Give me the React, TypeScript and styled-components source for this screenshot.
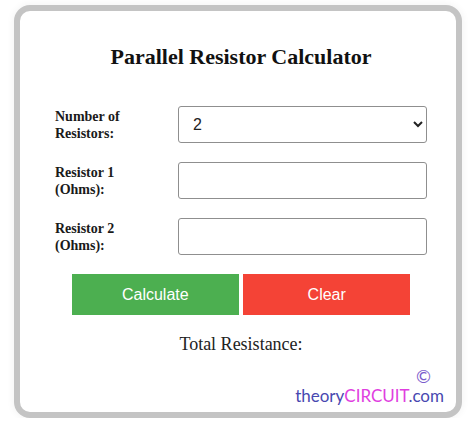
import React, { useState } from 'react';
import styled, { createGlobalStyle } from 'styled-components';

const GlobalStyle = createGlobalStyle`
    html, body {
        margin: 0;
        padding: 0;
        background: #ffffff;
    }
    body {
        font-family: 'Liberation Serif', 'Times New Roman', serif;
    }
`;

const Page = styled.div`
    padding: 5px 0 0 14px;
`;

const Card = styled.div`
    position: relative;
    box-sizing: border-box;
    width: 448px;
    height: 413px;
    padding: 33px 29px 0 35px;
    border: 6px solid #c4c4c4;
    border-radius: 16px;
    background: #ffffff;
    box-shadow: 0 0 8px rgba(0, 0, 0, 0.06);
`;

const Title = styled.h2`
    margin: 0 0 36px;
    font-size: 22px;
    line-height: 26px;
    font-weight: bold;
    text-align: center;
    color: #111;
`;

const Form = styled.div`
    display: grid;
    grid-template-columns: 123px 1fr;
    row-gap: 19px;
    align-items: center;
`;

const Label = styled.label`
    font-size: 14px;
    line-height: 17px;
    font-weight: bold;
    color: #1a1a1a;
`;

const fieldCss = `
    box-sizing: border-box;
    width: 100%;
    height: 37px;
    margin: 0;
    border: 1px solid #8f8f8f;
    border-radius: 3px;
    background: #fff;
    font-family: 'Liberation Sans', Arial, sans-serif;
    font-size: 16px;
    color: #222;
`;

const Select = styled.select`
    ${fieldCss}
    padding: 0 8px 0 10px;
`;

const Input = styled.input`
    ${fieldCss}
    padding: 0 10px;
`;

const Buttons = styled.div`
    display: flex;
    justify-content: center;
    gap: 4px;
    margin-top: 19px;
`;

const Button = styled.button<{ $tone: 'go' | 'stop' }>`
    width: 45%;
    height: 41px;
    border: none;
    border-radius: 0;
    background: ${(p) => (p.$tone === 'go' ? '#4caf50' : '#f44336')};
    color: #fff;
    font-family: 'Liberation Sans', Arial, sans-serif;
    font-size: 16px;
    cursor: pointer;
`;

const Result = styled.p`
    margin: 19px 0 0;
    font-size: 18px;
    line-height: 21px;
    text-align: center;
    color: #222;
`;

const Mark = styled.div`
    position: absolute;
    right: 12px;
    bottom: 6px;
    font-family: Lato, 'Open Sans', sans-serif;
    font-size: 17px;
    line-height: 20px;
    color: #4848b0;
`;

const Circuit = styled.span`
    color: #e03ee0;
`;

const Copy = styled.span`
    position: absolute;
    right: 13px;
    top: -19px;
    font-size: 18px;
    line-height: 18px;
    color: #7a5ccc;
`;

export default function App() {
    const [count, setCount] = useState('2');
    const [values, setValues] = useState<string[]>(['', '']);
    const [total, setTotal] = useState('');

    const n = Number(count);
    const rows = Array.from({ length: n }, (_, i) => values[i] ?? '');

    const calculate = () => {
        const nums = rows.map(Number).filter((v) => v > 0);
        if (!nums.length) return setTotal('');
        const r = 1 / nums.reduce((s, v) => s + 1 / v, 0);
        setTotal(`${r.toFixed(2)} Ohms`);
    };

    return (
        <>
            <GlobalStyle />
            <Page>
                <Card>
                    <Title>Parallel Resistor Calculator</Title>
                    <Form>
                        <Label htmlFor='count'>
                            Number of
                            <br />
                            Resistors:
                        </Label>
                        <Select id='count' value={count} onChange={(e) => setCount(e.target.value)}>
                            {[2, 3, 4, 5].map((v) => (
                                <option key={v} value={v}>
                                    {v}
                                </option>
                            ))}
                        </Select>
                        {rows.map((v, i) => (
                            <React.Fragment key={i}>
                                <Label htmlFor={`r${i}`}>
                                    Resistor {i + 1}
                                    <br />
                                    (Ohms):
                                </Label>
                                <Input
                                    id={`r${i}`}
                                    type='number'
                                    value={v}
                                    onChange={(e) => {
                                        const next = [...rows];
                                        next[i] = e.target.value;
                                        setValues(next);
                                    }}
                                />
                            </React.Fragment>
                        ))}
                    </Form>
                    <Buttons>
                        <Button $tone='go' onClick={calculate}>
                            Calculate
                        </Button>
                        <Button
                            $tone='stop'
                            onClick={() => {
                                setValues([]);
                                setTotal('');
                            }}>
                            Clear
                        </Button>
                    </Buttons>
                    <Result>Total Resistance: {total}</Result>
                    <Mark>
                        <Copy>©</Copy>
                        theory<Circuit>CIRCUIT</Circuit>.com
                    </Mark>
                </Card>
            </Page>
        </>
    );
}
